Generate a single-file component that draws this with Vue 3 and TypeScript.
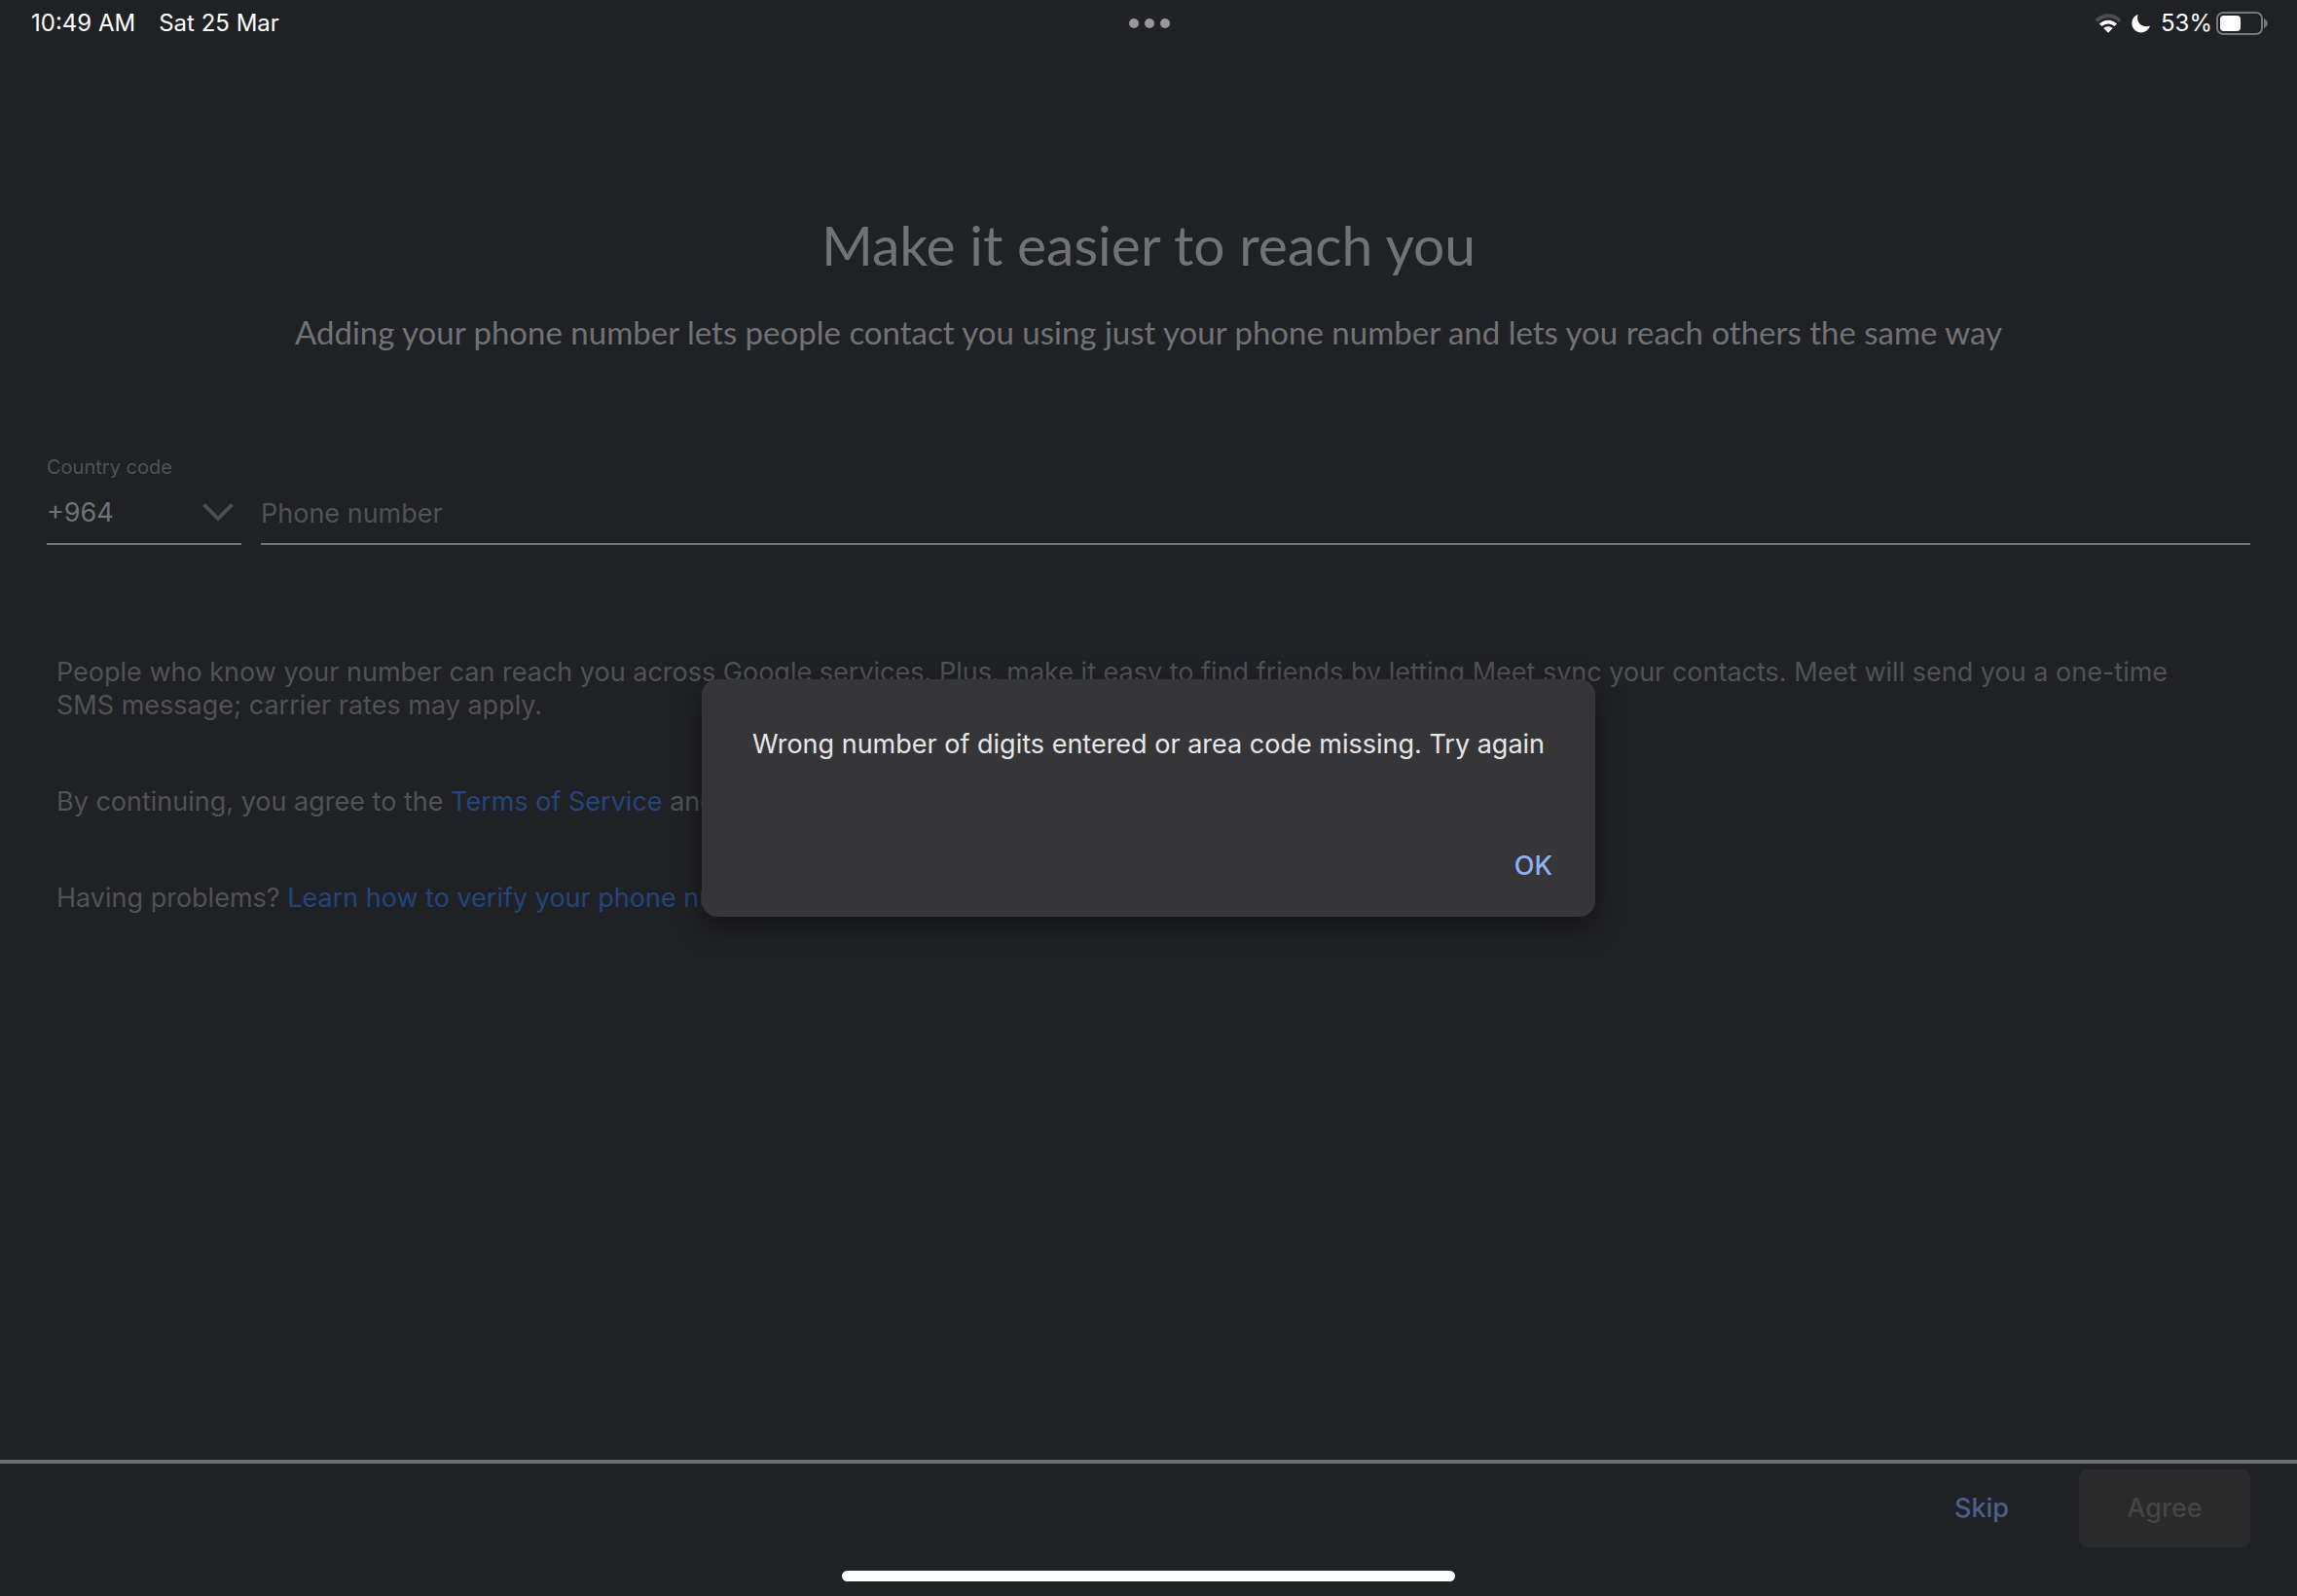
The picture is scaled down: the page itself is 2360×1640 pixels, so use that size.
<script setup lang="ts">
import { ref } from 'vue'

const countryCode = ref<string>('+964')
const phone = ref<string>('')
const battery = 53
</script>

<template>
  <div class="screen">
    <header class="status">
      <div class="status-left">
        <span>10:49 AM</span>
        <span>Sat 25 Mar</span>
      </div>
      <button class="dots" type="button" aria-label="Multitasking">
        <i></i><i></i><i></i>
      </button>
      <div class="status-right">
        <svg class="wifi" width="28" height="20" viewBox="0 0 28 20" aria-hidden="true">
          <path d="M0.6 6.2C8 -1.6 20 -1.6 27.4 6.2L25 8.7C19 2.6 9 2.6 3 8.7Z" fill="#4d4e51" />
          <path d="M4.9 10.5C10 5.4 18 5.4 23.1 10.5L20.5 13C16.8 9.5 11.2 9.5 7.5 13Z" fill="#fff" />
          <path d="M9.3 15C12 12.5 16 12.5 18.7 15L14 19.8Z" fill="#fff" />
        </svg>
        <svg class="moon" width="20" height="20" viewBox="0 0 20 20" aria-hidden="true">
          <path d="M6.6 0.8C5 6.2 7 15 19 12.8C17.4 17 13.8 19.4 9.8 19.4C4.5 19.4 0.4 15.3 0.4 10C0.4 5.8 2.8 2.3 6.6 0.8Z" fill="#fff" />
        </svg>
        <span>53%</span>
        <div class="battery">
          <div class="battery-case">
            <div class="battery-level" :style="{ width: battery + '%' }"></div>
          </div>
          <svg width="4" height="10" viewBox="0 0 4 10" aria-hidden="true">
            <path d="M0 0C5 2 5 8 0 10Z" fill="#77787b" />
          </svg>
        </div>
      </div>
    </header>

    <main class="content">
      <h1>Make it easier to reach you</h1>
      <p class="subtitle">
        Adding your phone number lets people contact you using just your phone number and lets you reach others the same way
      </p>

      <form class="fields" @submit.prevent>
        <div class="code-field">
          <label for="code">Country code</label>
          <div class="select-wrap">
            <select id="code" v-model="countryCode">
              <option>+964</option>
              <option>+44</option>
              <option>+1</option>
            </select>
            <svg class="chevron" width="32" height="20" viewBox="0 0 32 20" aria-hidden="true">
              <path d="M1.5 1.5L16 16L30.5 1.5" fill="none" stroke="#4b4c4f" stroke-width="4" />
            </svg>
          </div>
        </div>
        <input v-model="phone" class="phone" type="tel" placeholder="Phone number" aria-label="Phone number" />
      </form>

      <section class="notes">
        <p>
          People who know your number can reach you across Google services. Plus, make it easy to find friends by letting
          Meet sync your contacts. Meet will send you a one-time SMS message; carrier rates may apply.
        </p>
        <p>By continuing, you agree to the <a href="#terms">Terms of Service</a> and <a href="#privacy">Privacy Policy</a></p>
        <p>Having problems? <a href="#help">Learn how to verify your phone number</a></p>
      </section>
    </main>

    <footer class="footer">
      <div class="actions">
        <button class="skip" type="button">Skip</button>
        <button class="agree" type="button" disabled>Agree</button>
      </div>
      <div class="home-indicator"></div>
    </footer>

    <div class="overlay">
      <div class="dialog" role="alertdialog" aria-modal="true" aria-describedby="dialog-text">
        <p id="dialog-text">Wrong number of digits entered or area code missing. Try again</p>
        <button class="ok" type="button">OK</button>
      </div>
    </div>
  </div>
</template>

<style>
body {
  background: #202124;
}
</style>

<style scoped>
.screen {
  position: relative;
  display: flex;
  flex-direction: column;
  min-height: 100vh;
  background: #202124;
  color: #515256;
  font: 400 27px/34px Inter, "Liberation Sans", sans-serif;
}
.screen *,
.screen {
  box-sizing: border-box;
}
h1,
p {
  margin: 0;
}
button {
  margin: 0;
  border: 0;
  background: none;
  font: inherit;
  font-weight: 500;
}

.status {
  display: grid;
  grid-template-columns: 1fr auto 1fr;
  align-items: center;
  height: 48px;
  padding: 0 30px 0 32px;
  color: #fff;
  font-size: 24px;
}
.status-left {
  display: flex;
  gap: 24px;
}
.dots {
  display: flex;
  gap: 6px;
  padding: 0;
}
.dots i {
  width: 10px;
  height: 10px;
  border-radius: 50%;
  background: #98989b;
}
.status-right {
  display: flex;
  align-items: center;
  justify-content: flex-end;
}
.moon {
  margin: 0 10px;
}
.battery {
  display: flex;
  align-items: center;
  gap: 1px;
  margin-left: 4px;
}
.battery-case {
  width: 48px;
  height: 24px;
  padding: 2px;
  border: 2px solid #77787b;
  border-radius: 7px;
}
.battery-level {
  height: 100%;
  border-radius: 4px;
  background: #fff;
}

.content {
  flex: 1;
  padding: 167px 48px 0;
}
h1 {
  color: #717276;
  font: 400 57px/72px Lato, sans-serif;
  text-align: center;
}
.subtitle {
  margin-top: 34px;
  color: #717276;
  font: 400 33px/40px Lato, sans-serif;
  text-align: center;
}
.fields {
  display: flex;
  align-items: flex-end;
  gap: 20px;
  margin-top: 107px;
}
.code-field {
  width: 200px;
}
.code-field label {
  display: block;
  font-size: 20px;
  line-height: 24px;
}
.select-wrap {
  position: relative;
  margin-top: 4px;
}
select {
  display: block;
  width: 100%;
  height: 64px;
  padding: 0;
  border: 0;
  border-bottom: 2px solid #717276;
  border-radius: 0;
  appearance: none;
  background: none;
  color: #717276;
  font: inherit;
}
.chevron {
  position: absolute;
  top: 21px;
  right: 8px;
  pointer-events: none;
}
.phone {
  flex: 1;
  min-width: 0;
  height: 64px;
  padding: 0;
  border: 0;
  border-bottom: 2px solid #717276;
  border-radius: 0;
  outline: none;
  background: none;
  color: #717276;
  font: inherit;
}
.phone::placeholder {
  color: #515256;
  opacity: 1;
}

.notes {
  display: flex;
  flex-direction: column;
  gap: 65px;
  margin-top: 114px;
  padding: 0 48px 0 10px;
}
a {
  color: #23457c;
  text-decoration: none;
}

.footer {
  border-top: 4px solid #6d6e71;
}
.actions {
  display: flex;
  justify-content: flex-end;
  gap: 24px;
  padding: 6px 48px 24px;
}
.skip {
  width: 152px;
  height: 80px;
  color: #4c5f8a;
}
.agree {
  width: 176px;
  height: 80px;
  border-radius: 8px;
  background: #2a2a2b;
  color: #454547;
}
.home-indicator {
  width: 630px;
  height: 11px;
  margin: 0 auto 15px;
  border-radius: 6px;
  background: #fff;
}

.overlay {
  position: absolute;
  inset: 0;
  display: flex;
  align-items: center;
  justify-content: center;
}
.dialog {
  display: flex;
  flex-direction: column;
  justify-content: space-between;
  min-height: 244px;
  padding: 50px 52px 16px;
  border-radius: 16px;
  background: #363638;
  box-shadow: 0 10px 28px rgba(0, 0, 0, 0.4);
  color: #e6e6e8;
}
.ok {
  align-self: flex-end;
  height: 72px;
  margin-right: -24px;
  padding: 0 16px;
  color: #8fb0f5;
}
</style>
